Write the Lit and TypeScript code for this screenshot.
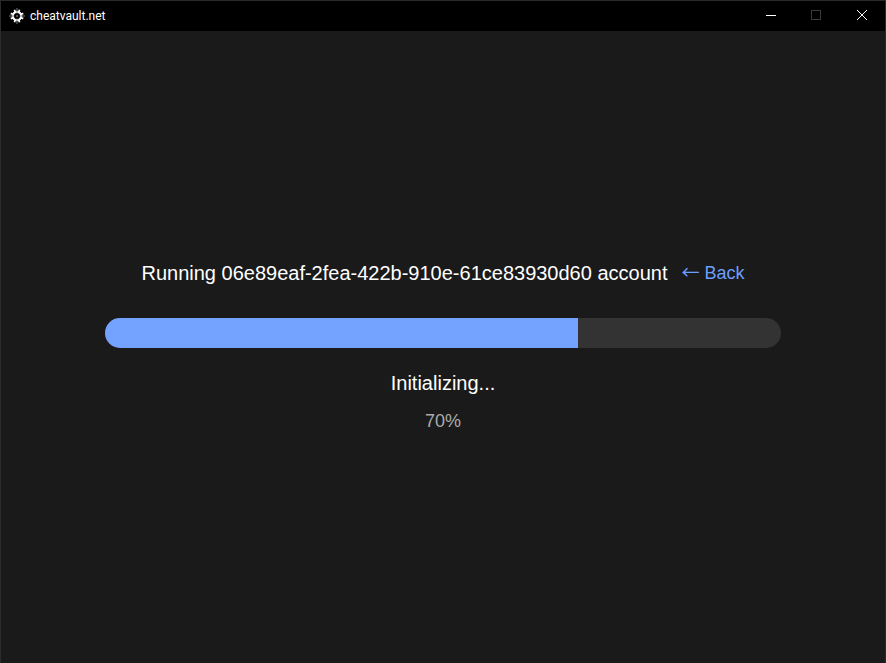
import { LitElement, html, css, svg } from 'lit';
import { customElement, property } from 'lit/decorators.js';

const diagonals = [22.5, 67.5, 112.5, 157.5, 202.5, 247.5, 292.5, 337.5];
const axes = [0, 90, 180, 270];

@customElement('title-bar')
export class TitleBar extends LitElement {
  static styles = css`
    :host {
      display: flex;
      align-items: center;
      height: 30px;
      background: #000;
      color: #fff;
      font-family: Roboto, 'Open Sans', sans-serif;
      font-size: 12px;
    }
    .logo {
      width: 16px;
      height: 16px;
      margin-left: 8px;
      margin-right: 5px;
    }
    .name {
      flex: 1;
    }
    .controls {
      display: flex;
      height: 100%;
    }
    .btn {
      width: 46px;
      display: flex;
      align-items: center;
      justify-content: center;
    }
    .btn svg {
      margin-bottom: 2px;
    }
    .min svg {
      margin-left: 2px;
    }
  `;

  render() {
    return html`
      <svg class="logo" viewBox="0 0 16 16" fill="none">
        <circle cx="8" cy="8" r="4.2" stroke="#fff" stroke-width="2.2"></circle>
        <circle cx="8" cy="8" r="0.8" fill="#bbb"></circle>
        ${diagonals.map(
          (a) => svg`<line x1="8" y1="3.5" x2="8" y2="1.2" stroke="#fff" stroke-width="1.7" transform="rotate(${a} 8 8)"></line>`
        )}
        ${axes.map(
          (a) => svg`<line x1="8" y1="5.5" x2="8" y2="0" stroke="#777" stroke-width="1" transform="rotate(${a} 8 8)"></line>`
        )}
      </svg>
      <span class="name">cheatvault.net</span>
      <div class="controls">
        <div class="btn min">
          <svg width="10" height="10" viewBox="0 0 10 10"><rect x="0" y="5" width="10" height="1" fill="#fff"></rect></svg>
        </div>
        <div class="btn">
          <svg width="10" height="10" viewBox="0 0 10 10"><rect x="0.5" y="0.5" width="9" height="9" fill="none" stroke="#3a3a3a"></rect></svg>
        </div>
        <div class="btn">
          <svg width="10" height="10" viewBox="0 0 10 10"><path d="M0 0L10 10M10 0L0 10" stroke="#fff" stroke-width="1" fill="none"></path></svg>
        </div>
      </div>
    `;
  }
}

@customElement('app-root')
export class AppRoot extends LitElement {
  @property({ type: Number }) progress = 70;

  static styles = css`
    :host {
      display: flex;
      flex-direction: column;
      height: 663px;
      box-sizing: border-box;
      border: 1px solid #2b2b2b;
      border-bottom: none;
      background: #1a1a1a;
      font-family: 'Liberation Sans', Arial, sans-serif;
      overflow: hidden;
    }
    .main {
      flex: 1;
      display: flex;
      flex-direction: column;
      align-items: center;
      justify-content: center;
    }
    .heading {
      display: flex;
      align-items: center;
      gap: 14px;
      color: #fff;
      font-size: 20px;
      line-height: 23px;
      margin-bottom: 33px;
    }
    .back {
      color: #6b9eff;
      font-size: 18px;
      line-height: 23px;
    }
    .arrow {
      font-family: 'Noto Sans CJK SC', sans-serif;
      line-height: 1;
    }
    .track {
      width: 676px;
      height: 30px;
      border-radius: 15px;
      background: #333;
      overflow: hidden;
      margin-bottom: 24px;
    }
    .fill {
      height: 100%;
      background: #74a3ff;
    }
    .status {
      color: #fff;
      font-size: 20px;
      line-height: 23px;
      margin-bottom: 16px;
    }
    .pct {
      color: #aaa;
      font-size: 18px;
      line-height: 21px;
    }
  `;

  render() {
    return html`
      <title-bar></title-bar>
      <div class="main">
        <div class="heading">
          <span>Running 06e89eaf-2fea-422b-910e-61ce83930d60 account</span>
          <span class="back"><span class="arrow">←</span> Back</span>
        </div>
        <div class="track">
          <div class="fill" style="width: ${this.progress}%"></div>
        </div>
        <div class="status">Initializing...</div>
        <div class="pct">${this.progress}%</div>
      </div>
    `;
  }
}
